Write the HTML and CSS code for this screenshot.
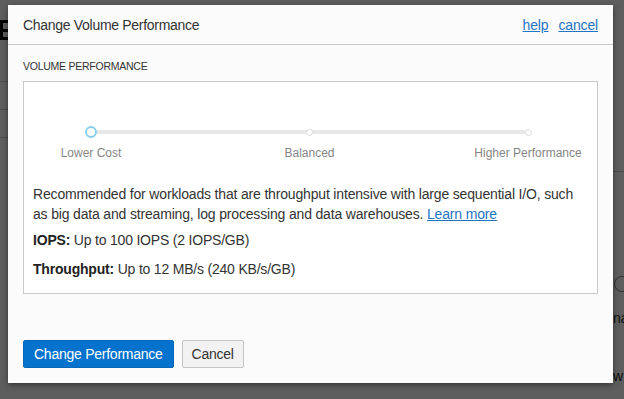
FILE: index.html
```html
<!DOCTYPE html>
<html lang="en">
<head>
<meta charset="utf-8">
<title>Change Volume Performance</title>
<link rel="stylesheet" href="styles.css">
</head>
<body>
<div class="page">
  <div class="page-left">
    <div class="pl-head"><span class="pl-icon"><i></i><i></i><i></i></span></div>
    <div class="pl-row"></div>
    <div class="pl-row"></div>
  </div>
  <div class="page-center"></div>
  <div class="page-right">
    <div class="pr-head"></div>
    <div class="pr-radio"></div>
    <div class="pr-text">na</div>
    <div class="pr-text pr-text2">w</div>
  </div>
</div>
<div class="overlay"></div>

<div class="dialog">
  <div class="dialog-header">
    <h1 class="dialog-title">Change Volume Performance</h1>
    <div class="header-links">
      <a href="#" class="link">help</a>
      <a href="#" class="link">cancel</a>
    </div>
  </div>
  <div class="dialog-body">
    <div class="section-label">Volume Performance</div>
    <div class="perf-box">
      <div class="slider">
        <div class="track">
          <span class="stop"><span class="dot dot-active"></span></span>
          <span class="stop"><span class="dot"></span></span>
          <span class="stop"><span class="dot"></span></span>
        </div>
        <div class="stop-labels">
          <span class="stop-label">Lower Cost</span>
          <span class="stop-label">Balanced</span>
          <span class="stop-label">Higher Performance</span>
        </div>
      </div>
      <p class="desc">Recommended for workloads that are throughput intensive with large sequential I/O, such as big data and streaming, log processing and data warehouses. <a href="#" class="link">Learn more</a></p>
      <p class="stat stat-iops"><b>IOPS:</b> Up to 100 IOPS (2 IOPS/GB)</p>
      <p class="stat"><b>Throughput:</b> Up to 12 MB/s (240 KB/s/GB)</p>
    </div>
  </div>
  <div class="dialog-footer">
    <button class="btn btn-primary">Change Performance</button>
    <button class="btn btn-default">Cancel</button>
  </div>
</div>
</body>
</html>
```

FILE: styles.css
```css
* { box-sizing: border-box; }

html, body {
  margin: 0;
  width: 624px;
  height: 399px;
  overflow: hidden;
}

body {
  position: relative;
  background: #ffffff;
  font-family: "Liberation Sans", Arial, sans-serif;
  color: #333333;
}

/* underlying page (dimmed) */
.page {
  display: flex;
  height: 399px;
}
.page-left {
  width: 8px;
  overflow: hidden;
}
.pl-head {
  height: 82px;
  padding-top: 20px;
  border-bottom: 1px solid #cfcfcf;
}
.pl-icon {
  display: flex;
  flex-direction: column;
  justify-content: space-between;
  width: 8px;
  height: 20px;
  border-left: 3px solid #111;
}
.pl-icon i {
  display: block;
  height: 3px;
  background: #111;
}
.pl-row {
  height: 28px;
  border-bottom: 1px solid #cfcfcf;
}
.page-center { flex: 1; }
.page-right {
  width: 12px;
  overflow: hidden;
}
.pr-head {
  height: 172px;
  border-bottom: 1px solid #cfcfcf;
}
.pr-radio {
  width: 16px;
  height: 16px;
  margin: 104px 0 0 2px;
  border: 1px solid #8a8a8a;
  border-radius: 50%;
}
.pr-text {
  margin: 18px 0 0 1px;
  font-size: 14px;
  line-height: 16px;
  color: #333;
}
.pr-text2 { margin-top: 42px; }

.overlay {
  position: absolute;
  inset: 0;
  background: rgba(0, 0, 0, 0.63);
}

/* dialog */
.dialog {
  position: absolute;
  left: 8px;
  top: 5px;
  width: 605px;
  height: 378px;
  background: #fbfbfb;
  box-shadow: 0 2px 6px rgba(0, 0, 0, 0.45);
  display: flex;
  flex-direction: column;
}

.dialog-header {
  height: 40px;
  padding: 0 15px;
  display: flex;
  align-items: center;
  justify-content: space-between;
  border-bottom: 1px solid #c8c8c8;
}
.dialog-title {
  margin: 0;
  font-size: 14px;
  letter-spacing: -0.3px;
  font-weight: normal;
  line-height: 20px;
  color: #333;
}
.header-links {
  display: flex;
  gap: 10px;
  font-size: 14px;
  line-height: 20px;
  letter-spacing: -0.15px;
}
.link {
  color: #1f74c4;
  text-decoration: underline;
}

.dialog-body {
  padding: 14px 15px 0;
}
.section-label {
  font-size: 10.5px;
  letter-spacing: -0.25px;
  line-height: 14px;
  text-transform: uppercase;
  color: #333;
  margin-bottom: 8px;
}

.perf-box {
  border: 1px solid #c9c9c9;
  background: #ffffff;
  padding: 44px 9px 14px;
}

.slider {
  margin: 0 54px 0 52px;
}
.track {
  position: relative;
  height: 12px;
  display: flex;
  justify-content: space-between;
  align-items: center;
}
.track::before {
  content: "";
  position: absolute;
  left: 6px;
  right: 6px;
  top: 4px;
  height: 4px;
  background: #e8e8e8;
  border-radius: 2px;
}
.stop {
  position: relative;
  width: 12px;
  height: 12px;
  display: flex;
  align-items: center;
  justify-content: center;
}
.dot {
  width: 7px;
  height: 7px;
  border-radius: 50%;
  background: #fff;
  border: 1px solid #dcdcdc;
}
.dot-active {
  width: 12px;
  height: 12px;
  border: 2px solid #8ccfea;
}
.stop-labels {
  margin: 8px -54px 0;
  display: flex;
  justify-content: space-between;
}
.stop-label {
  width: 120px;
  text-align: center;
  font-size: 12px;
  line-height: 14px;
  color: #858585;
}

.desc {
  margin: 24px 0 6px;
  font-size: 14px;
  letter-spacing: -0.17px;
  line-height: 20px;
  color: #333;
}
.stat {
  margin: 0;
  font-size: 14px;
  letter-spacing: -0.2px;
  line-height: 20px;
  color: #333;
}
.stat b { color: #222; }
.stat-iops { margin-bottom: 9px; }

.dialog-footer {
  margin-top: 46px;
  padding: 0 15px;
  display: flex;
  gap: 8px;
}
.btn {
  height: 28px;
  padding: 0 10px;
  font-family: "Liberation Sans", Arial, sans-serif;
  font-size: 14px;
  letter-spacing: -0.25px;
  border-radius: 2px;
  cursor: pointer;
}
.btn-primary {
  background: #0572ce;
  border: 1px solid #0567ba;
  color: #ffffff;
}
.btn-default {
  padding: 0 9px;
  background: #f2f2f2;
  border: 1px solid #c4c4c4;
  color: #333;
}
```
